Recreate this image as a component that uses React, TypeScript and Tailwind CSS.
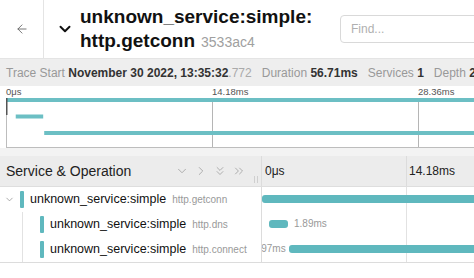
import React from 'react';
import { ArrowLeft, ChevronDown, ChevronRight, ChevronsDown, ChevronsRight } from 'lucide-react';

const TRACE_MS = 56.71;
const MINI_W = 824;
const TL_W = 576;

interface Span {
  service: string;
  operation: string;
  depth: number;
  startMs: number;
  durationMs: number;
  labelSide: 'left' | 'right' | 'none';
}

const spans: Span[] = [
  { service: 'unknown_service:simple', operation: 'http.getconn', depth: 0, startMs: 0, durationMs: 56.71, labelSide: 'none' },
  { service: 'unknown_service:simple', operation: 'http.dns', depth: 1, startMs: 0.67, durationMs: 1.89, labelSide: 'right' },
  { service: 'unknown_service:simple', operation: 'http.connect', depth: 1, startMs: 2.63, durationMs: 53.97, labelSide: 'left' },
];

const Minimap = () => {
  const scale = MINI_W / TRACE_MS;
  return (
    <div className="bg-white">
      <div className="relative h-[12px] text-[9.5px] leading-[12px] text-[#555]">
        <span className="absolute left-[6px] top-0">0μs</span>
        <span className="absolute left-[212px] top-0">14.18ms</span>
        <span className="absolute left-[418px] top-0">28.36ms</span>
      </div>
      <div className="pl-[6px]">
        <svg width={468} height={50} className="block">
          <rect x={0} y={0} width={468} height={50} fill="#fff" />
          <line x1={206.5} y1={0} x2={206.5} y2={49} stroke="#b5b5b5" strokeWidth={1} />
          <line x1={412.5} y1={0} x2={412.5} y2={49} stroke="#b5b5b5" strokeWidth={1} />
          {spans.map((s, i) => (
            <rect
              key={i}
              x={s.startMs * scale}
              y={i * 16.5}
              width={s.durationMs * scale}
              height={4}
              fill="#6cbfc4"
            />
          ))}
          <line x1={0.5} y1={0} x2={0.5} y2={49} stroke="#bdbdbd" strokeWidth={1} />
          <line x1={0.5} y1={0} x2={0.5} y2={17} stroke="#555" strokeWidth={2} />
          <line x1={0} y1={49.5} x2={468} y2={49.5} stroke="#bdbdbd" strokeWidth={1} />
        </svg>
      </div>
    </div>
  );
};

const Row = ({ span }: { span: Span }) => {
  const scale = TL_W / TRACE_MS;
  const left = span.startMs * scale;
  const width = span.durationMs * scale;
  const label = `${span.durationMs.toFixed(2)}ms`;

  return (
    <div className="flex h-[25px]">
      <div className="relative w-[262px] shrink-0 border-r border-[#dcdcdc] flex items-center overflow-hidden">
        {span.depth === 0 ? (
          <>
            <ChevronDown size={11} strokeWidth={1.5} className="ml-[4px] text-[#888]" />
            <span className="ml-[5px] w-[4px] h-[17px] rounded-[1px] bg-[#5fb8be]" />
            <span className="ml-[6px] text-[12.5px] text-[#111] whitespace-nowrap">{span.service}</span>
          </>
        ) : (
          <>
            <span className="ml-[22px] w-px h-full bg-[#e2e2e2]" />
            <span className="ml-[17px] w-[4px] h-[17px] rounded-[1px] bg-[#5fb8be]" />
            <span className="ml-[6px] text-[12.5px] text-[#111] whitespace-nowrap">{span.service}</span>
          </>
        )}
        <span className="ml-[6px] text-[10px] text-[#999] whitespace-nowrap">{span.operation}</span>
      </div>
      <div className="relative flex-1 overflow-hidden">
        <div className="absolute left-[144px] top-0 bottom-0 w-px bg-[#e2e2e2]" />
        <div
          className="absolute top-[8px] h-[8px] rounded-[3px] bg-[#5fb8be]"
          style={{ left, width }}
        />
        {span.labelSide === 'right' && (
          <span
            className="absolute top-[5px] text-[10px] leading-[14px] text-[#999] whitespace-nowrap"
            style={{ left: left + width + 6 }}
          >
            {label}
          </span>
        )}
        {span.labelSide === 'left' && (
          <span
            className="absolute top-[5px] text-[10px] leading-[14px] text-[#999] whitespace-nowrap -translate-x-full"
            style={{ left: left - 3 }}
          >
            {label}
          </span>
        )}
      </div>
    </div>
  );
};

export default function App() {
  return (
    <div className="w-[474px] h-[278px] overflow-hidden bg-white font-['Liberation_Sans',Arial,sans-serif]">
      {/* header */}
      <div className="flex h-[59px] border-b border-[#e4e4e4]">
        <div className="w-[44px] shrink-0 border-r border-[#e4e4e4] flex items-center justify-center">
          <ArrowLeft size={14} strokeWidth={1.5} className="text-[#666]" />
        </div>
        <div className="flex items-center pl-[12px] shrink-0">
          <ChevronDown size={18} strokeWidth={2.6} className="text-[#111]" />
        </div>
        <div className="w-[266px] shrink-0 pl-[6px] flex flex-col justify-center leading-[24px]">
          <div className="text-[19px] font-bold text-[#111] whitespace-nowrap">unknown_service:simple:</div>
          <div className="whitespace-nowrap">
            <span className="text-[19px] font-bold text-[#111]">http.getconn</span>
            <span className="ml-[6px] text-[14px] text-[#a0a0a0]">3533ac4</span>
          </div>
        </div>
        <div className="flex items-center shrink-0">
          <div className="w-[200px] h-[28px] rounded-[4px] border border-[#d9d9d9] flex items-center pl-[10px] text-[12px] text-[#b0b0b0]">
            Find...
          </div>
        </div>
      </div>

      {/* trace meta */}
      <div className="h-[27px] bg-[#eeeeee] flex items-center gap-[10px] px-[6px] text-[12px] whitespace-nowrap">
        <span>
          <span className="text-[#999]">Trace Start </span>
          <span className="font-bold text-[#333]">November 30 2022, 13:35:32</span>
          <span className="text-[#aaa]">.772</span>
        </span>
        <span>
          <span className="text-[#999]">Duration </span>
          <span className="font-bold text-[#333]">56.71ms</span>
        </span>
        <span>
          <span className="text-[#999]">Services </span>
          <span className="font-bold text-[#333]">1</span>
        </span>
        <span>
          <span className="text-[#999]">Depth </span>
          <span className="font-bold text-[#333]">2</span>
        </span>
      </div>

      <Minimap />

      <div className="h-[8px] bg-[#f3f3f3]" />

      {/* span table */}
      <div className="border-b border-[#dcdcdc]">
        <div className="flex h-[31px] bg-[#ececec] border-b border-[#dedede]">
          <div className="relative w-[262px] shrink-0 border-r border-[#dcdcdc] flex items-center pl-[6px]">
            <span className="text-[14px] text-[#222]">Service &amp; Operation</span>
            <div className="ml-auto mr-[15px] flex items-center gap-[5px] text-[#999]">
              <ChevronDown size={14} strokeWidth={1.3} />
              <ChevronRight size={14} strokeWidth={1.3} />
              <ChevronsDown size={14} strokeWidth={1.3} />
              <ChevronsRight size={14} strokeWidth={1.3} />
            </div>
            <div className="absolute right-[3px] top-[20px] flex gap-[2px]">
              <span className="w-px h-[7px] bg-[#cfcfcf]" />
              <span className="w-px h-[7px] bg-[#cfcfcf]" />
            </div>
          </div>
          <div className="relative flex-1 flex items-center text-[12px] text-[#222]">
            <span className="absolute left-[3px]">0μs</span>
            <div className="absolute left-[144px] top-0 bottom-0 w-px bg-[#dcdcdc]" />
            <span className="absolute left-[147px]">14.18ms</span>
          </div>
        </div>
        {spans.map((s, i) => (
          <Row key={i} span={s} />
        ))}
      </div>
    </div>
  );
}
